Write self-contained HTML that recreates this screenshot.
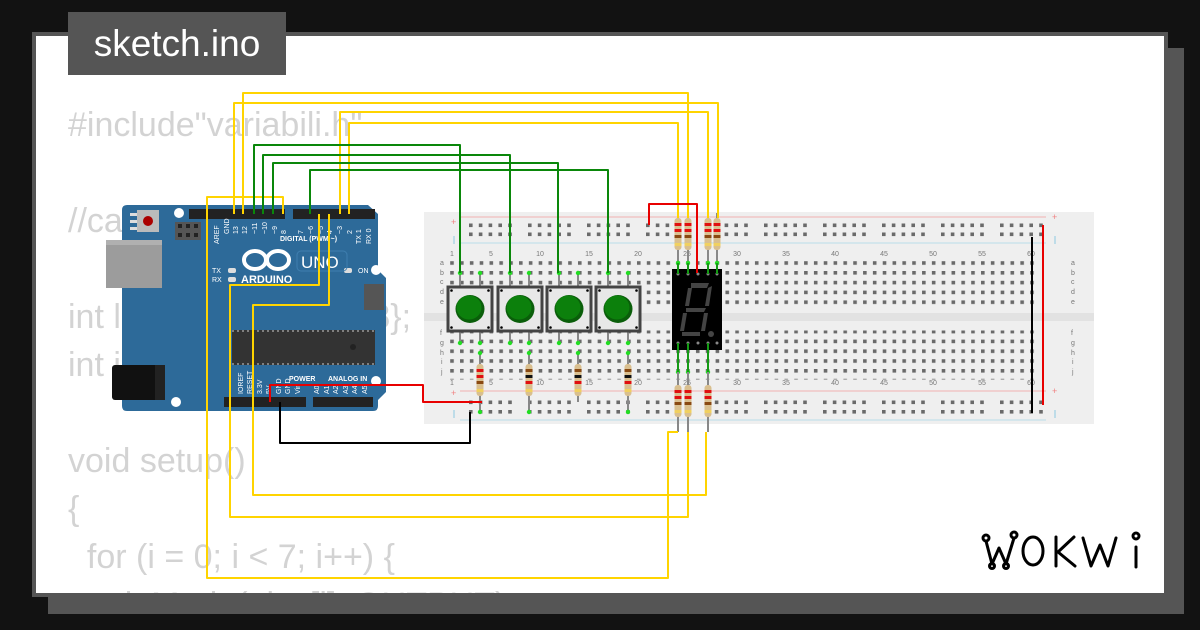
<!DOCTYPE html>
<html><head><meta charset="utf-8"><style>
html,body{margin:0;padding:0;background:#121212;}
body{width:1200px;height:630px;position:relative;overflow:hidden;font-family:"Liberation Sans",sans-serif;}
.shadow{position:absolute;left:48px;top:48px;width:1136px;height:566px;background:#555;}
.panel{position:absolute;left:32px;top:32px;width:1128px;height:557px;background:#fff;border:4px solid #555;}
.tab{position:absolute;left:68px;top:12px;width:218px;height:63px;background:#555;color:#fff;font-size:37px;line-height:63px;text-align:center;}
.code{position:absolute;left:68px;top:101px;font-size:34px;line-height:48px;color:#d3d3d3;white-space:pre;}
.clip{position:absolute;left:36px;top:36px;width:1128px;height:557px;overflow:hidden;}
svg{position:absolute;left:0;top:0;}
</style></head><body>
<div class="shadow"></div>
<div class="panel"></div>
<div class="clip"><div class="code" style="left:32px;top:65px">#include"variabili.h"

//carattere

int lettere[] = {10, 9, 8};
int i;

void setup()
{
  for (i = 0; i &lt; 7; i++) {
    pinMode(pins[i], OUTPUT);</div></div>
<div class="tab">sketch.ino</div>
<svg width="1200" height="630" viewBox="0 0 1200 630">
<defs>
<pattern id="h" x="450.2" y="261.2" width="9.83" height="9.8" patternUnits="userSpaceOnUse"><rect width="3.6" height="3.6" fill="#6a6a6a"/></pattern>
<pattern id="r" x="469" y="0" width="59" height="10" patternUnits="userSpaceOnUse">
<rect x="0" width="3.6" height="3.6" fill="#6a6a6a"/><rect x="9.8" width="3.6" height="3.6" fill="#6a6a6a"/><rect x="19.6" width="3.6" height="3.6" fill="#6a6a6a"/><rect x="29.4" width="3.6" height="3.6" fill="#6a6a6a"/><rect x="39.2" width="3.6" height="3.6" fill="#6a6a6a"/></pattern>
<g id="btn"><rect x="0" y="0" width="44" height="44" fill="#e8e8e8" stroke="#444" stroke-width="3"/>
<circle cx="3.5" cy="3.5" r="1.3" fill="#000"/><circle cx="40.5" cy="3.5" r="1.3" fill="#000"/><circle cx="3.5" cy="40.5" r="1.3" fill="#000"/><circle cx="40.5" cy="40.5" r="1.3" fill="#000"/>
<ellipse cx="22" cy="22" rx="14.5" ry="14" fill="#0a5e0a"/><ellipse cx="21" cy="20.5" rx="12.5" ry="12" fill="#0c800c"/></g>
<g id="resA"><rect x="-3.5" y="0" width="7" height="32" rx="3" fill="#d9bf8f"/><rect x="-3.5" y="5" width="7" height="3" fill="#e01010"/><rect x="-3.5" y="11" width="7" height="3" fill="#e01010"/><rect x="-3.5" y="17" width="7" height="3" fill="#8a4a12"/><rect x="-3.5" y="25" width="7" height="3" fill="#f0d060"/></g>
<g id="resB"><rect x="-3.5" y="0" width="7" height="32" rx="3" fill="#d9bf8f"/><rect x="-3.5" y="5" width="7" height="3" fill="#8a4a12"/><rect x="-3.5" y="11" width="7" height="3" fill="#111"/><rect x="-3.5" y="17" width="7" height="3" fill="#e01010"/><rect x="-3.5" y="25" width="7" height="3" fill="#f0d060"/></g>
</defs>

<!-- breadboard -->
<rect x="424" y="212" width="670" height="212" fill="#efefef"/>
<rect x="424" y="313" width="670" height="8" fill="#e2e2e2"/>
<line x1="460" y1="217" x2="1046" y2="217" stroke="#f2b0b0" stroke-width="1"/>
<line x1="460" y1="243" x2="1046" y2="243" stroke="#b8dcea" stroke-width="1"/>
<line x1="460" y1="391" x2="1046" y2="391" stroke="#f2b0b0" stroke-width="1"/>
<line x1="460" y1="420" x2="1046" y2="420" stroke="#b8dcea" stroke-width="1"/>
<g fill="#f08080" font-size="9"><text x="451" y="225">+</text><text x="1052" y="220">+</text><text x="451" y="396">+</text><text x="1052" y="394">+</text></g>
<g stroke="#8cc8e0"><line x1="454" y1="236" x2="454" y2="244"/><line x1="1055" y1="236" x2="1055" y2="244"/><line x1="454" y1="410" x2="454" y2="418"/><line x1="1055" y1="410" x2="1055" y2="418"/></g>
<g transform="translate(0,223.5)"><rect x="469" y="0" width="576" height="4" fill="url(#r)"/></g>
<g transform="translate(0,232.5)"><rect x="469" y="0" width="576" height="4" fill="url(#r)"/></g>
<g transform="translate(0,400.5)"><rect x="469" y="0" width="576" height="4" fill="url(#r)"/></g>
<g transform="translate(0,410)"><rect x="469" y="0" width="576" height="4" fill="url(#r)"/></g>
<rect x="450" y="261" width="590" height="49" fill="url(#h)"/>
<rect x="450" y="330.5" width="590" height="49" fill="url(#h)"/>
<g font-size="7" fill="#777">
<text x="440" y="265">a</text><text x="440" y="275">b</text><text x="440" y="284">c</text><text x="440" y="294">d</text><text x="440" y="304">e</text>
<text x="440" y="335">f</text><text x="440" y="345">g</text><text x="440" y="355">h</text><text x="441" y="364">i</text><text x="441" y="374">j</text>
<text x="1071" y="265">a</text><text x="1071" y="275">b</text><text x="1071" y="284">c</text><text x="1071" y="294">d</text><text x="1071" y="304">e</text>
<text x="1071" y="335">f</text><text x="1071" y="345">g</text><text x="1071" y="355">h</text><text x="1072" y="364">i</text><text x="1072" y="374">j</text>
</g>
<g font-size="7" fill="#777" text-anchor="middle">
<text x="452" y="256">1</text><text x="491" y="256">5</text><text x="540" y="256">10</text><text x="589" y="256">15</text><text x="638" y="256">20</text><text x="687" y="256">25</text><text x="737" y="256">30</text><text x="786" y="256">35</text><text x="835" y="256">40</text><text x="884" y="256">45</text><text x="933" y="256">50</text><text x="982" y="256">55</text><text x="1031" y="256">60</text>
<text x="452" y="385">1</text><text x="491" y="385">5</text><text x="540" y="385">10</text><text x="589" y="385">15</text><text x="638" y="385">20</text><text x="687" y="385">25</text><text x="737" y="385">30</text><text x="786" y="385">35</text><text x="835" y="385">40</text><text x="884" y="385">45</text><text x="933" y="385">50</text><text x="982" y="385">55</text><text x="1031" y="385">60</text>
</g>

<!-- arduino -->
<path d="M122 210 Q122 205 127 205 L368 205 L378 214 L378 270 L386 278 L386 392 L378 400 L378 406 Q378 411 373 411 L127 411 Q122 411 122 406 Z" fill="#2d6a99"/>
<rect x="106" y="240" width="56" height="48" fill="#9c9c9c"/><rect x="106" y="240" width="56" height="5" fill="#b0b0b0"/>
<rect x="112" y="365" width="53" height="35" rx="3" fill="#111"/><rect x="155" y="365" width="10" height="35" fill="#222"/>
<rect x="137" y="210" width="22" height="22" fill="#bbb"/><circle cx="148" cy="221" r="5" fill="#a00"/>
<rect x="130" y="213" width="7" height="3" fill="#ddd"/><rect x="130" y="220" width="7" height="3" fill="#ddd"/><rect x="130" y="227" width="7" height="3" fill="#ddd"/>
<rect x="175" y="222" width="26" height="18" fill="#555"/>
<g fill="#222"><rect x="178" y="224" width="4" height="4"/><rect x="186" y="224" width="4" height="4"/><rect x="194" y="224" width="4" height="4"/><rect x="178" y="233" width="4" height="4"/><rect x="186" y="233" width="4" height="4"/><rect x="194" y="233" width="4" height="4"/></g>
<rect x="364" y="284" width="20" height="26" fill="#555"/>
<circle cx="179" cy="213" r="5" fill="#fff"/><circle cx="376" cy="270" r="5" fill="#fff"/><circle cx="376" cy="381" r="5" fill="#fff"/><circle cx="176" cy="402" r="5" fill="#fff"/>
<rect x="189" y="209" width="96" height="10" fill="#222"/><rect x="293" y="209" width="82" height="10" fill="#222"/>
<rect x="224" y="397" width="82" height="10" fill="#222"/><rect x="313" y="397" width="60" height="10" fill="#222"/>
<rect x="232" y="330" width="143" height="35" fill="#333"/><line x1="232" y1="331" x2="375" y2="331" stroke="#ccc" stroke-dasharray="2 3"/><line x1="232" y1="364" x2="375" y2="364" stroke="#ccc" stroke-dasharray="2 3"/>
<circle cx="353" cy="347" r="3" fill="#222"/>
<g fill="#fff" font-size="7" font-weight="bold">
<text x="280" y="241">DIGITAL (PWM ~)</text>
<text x="289" y="381">POWER</text><text x="328" y="381">ANALOG IN</text>
</g>
<g fill="#fff" font-size="7"><text x="212" y="273">TX</text><text x="212" y="282">RX</text><text x="358" y="273">ON</text></g>
<rect x="228" y="268" width="8" height="5" rx="2" fill="#ddd"/><rect x="228" y="277" width="8" height="5" rx="2" fill="#ddd"/><rect x="344" y="268" width="8" height="5" rx="2" fill="#ddd"/>
<g fill="none" stroke="#fff" stroke-width="4"><ellipse cx="255" cy="260" rx="11" ry="9"/><ellipse cx="278" cy="260" rx="11" ry="9"/></g>
<text x="241" y="283" fill="#fff" font-size="11" font-weight="bold">ARDUINO</text>
<rect x="297" y="251" width="50" height="20" rx="4" fill="none" stroke="#3f7fb0"/>
<text x="301" y="268" fill="#fff" font-size="17">UNO</text>
<g fill="#fff" font-size="7" transform="rotate(-90)">
<text x="-244" y="219">AREF</text><text x="-234" y="229">GND</text><text x="-234" y="238">13</text><text x="-234" y="247">12</text><text x="-234" y="257">~11</text><text x="-234" y="267">~10</text><text x="-234" y="277">~9</text><text x="-234" y="286">8</text>
<text x="-234" y="303">7</text><text x="-234" y="313">~6</text><text x="-234" y="323">~5</text><text x="-234" y="332">4</text><text x="-234" y="342">~3</text><text x="-234" y="352">2</text><text x="-244" y="361">TX 1</text><text x="-244" y="371">RX 0</text>
<text x="-394" y="243">IOREF</text><text x="-394" y="252">RESET</text><text x="-394" y="262">3.3V</text><text x="-394" y="271">5V</text><text x="-394" y="281">GND</text><text x="-394" y="290">GND</text><text x="-394" y="300">Vin</text>
<text x="-394" y="319">A0</text><text x="-394" y="329">A1</text><text x="-394" y="338">A2</text><text x="-394" y="348">A3</text><text x="-394" y="357">A4</text><text x="-394" y="367">A5</text>
</g>

<!-- components on breadboard -->
<g stroke="#888" stroke-width="2">
<line x1="460" y1="273" x2="460" y2="343"/><line x1="480" y1="273" x2="480" y2="343"/>
<line x1="510" y1="273" x2="510" y2="343"/><line x1="529" y1="273" x2="529" y2="343"/>
<line x1="559" y1="273" x2="559" y2="343"/><line x1="578" y1="273" x2="578" y2="343"/>
<line x1="608" y1="273" x2="608" y2="343"/><line x1="628" y1="273" x2="628" y2="343"/>
<line x1="480" y1="353" x2="480" y2="412"/><line x1="529" y1="353" x2="529" y2="412"/><line x1="578" y1="353" x2="578" y2="402"/><line x1="628" y1="353" x2="628" y2="412"/>
<line x1="678" y1="213" x2="678" y2="265"/><line x1="688" y1="213" x2="688" y2="265"/><line x1="708" y1="213" x2="708" y2="265"/><line x1="717" y1="213" x2="717" y2="265"/>
</g>
<use href="#btn" x="448" y="287"/><use href="#btn" x="498" y="287"/><use href="#btn" x="547" y="287"/><use href="#btn" x="596" y="287"/>
<use href="#resA" x="480" y="364"/><use href="#resB" x="529" y="364"/><use href="#resB" x="578" y="364"/><use href="#resB" x="628" y="364"/>
<use href="#resA" x="678" y="218"/><use href="#resA" x="688" y="218"/><use href="#resA" x="708" y="218"/><use href="#resA" x="717" y="218"/>
<g fill="#22dd22">
<circle cx="460" cy="273" r="2.2"/><circle cx="480" cy="273" r="2.2"/><circle cx="510" cy="273" r="2.2"/><circle cx="529" cy="273" r="2.2"/><circle cx="559" cy="273" r="2.2"/><circle cx="578" cy="273" r="2.2"/><circle cx="608" cy="273" r="2.2"/><circle cx="628" cy="273" r="2.2"/>
<circle cx="460" cy="343" r="2.2"/><circle cx="480" cy="343" r="2.2"/><circle cx="510" cy="343" r="2.2"/><circle cx="529" cy="343" r="2.2"/><circle cx="559" cy="343" r="2.2"/><circle cx="578" cy="343" r="2.2"/><circle cx="608" cy="343" r="2.2"/><circle cx="628" cy="343" r="2.2"/>
<circle cx="480" cy="353" r="2.2"/><circle cx="529" cy="353" r="2.2"/><circle cx="578" cy="353" r="2.2"/><circle cx="628" cy="353" r="2.2"/>
<circle cx="480" cy="412" r="2.2"/><circle cx="529" cy="412" r="2.2"/><circle cx="628" cy="412" r="2.2"/>
<circle cx="678" cy="263" r="2.2"/><circle cx="688" cy="263" r="2.2"/><circle cx="708" cy="263" r="2.2"/><circle cx="717" cy="263" r="2.2"/>
<circle cx="678" cy="372" r="2.2"/><circle cx="688" cy="372" r="2.2"/><circle cx="708" cy="372" r="2.2"/>
</g>
<!-- 7 seg -->
<rect x="672" y="269" width="50" height="81" fill="#000"/>
<g fill="#444">
<polygon points="691,283 709,283 707,288 691,288"/>
<polygon points="688,288 692,288 689,306 685,306"/>
<polygon points="708,288 712,286 709,306 705,306"/>
<polygon points="686,308 706,308 704,312 686,312"/>
<polygon points="683,313 687,313 684,331 680,331"/>
<polygon points="704,313 708,313 705,331 701,331"/>
<polygon points="682,332 700,332 700,336 682,336"/>
<circle cx="711" cy="334" r="3"/>
</g>
<g fill="#888"><circle cx="678" cy="274" r="1.5"/><circle cx="688" cy="274" r="1.5"/><circle cx="698" cy="274" r="1.5"/><circle cx="708" cy="274" r="1.5"/><circle cx="717" cy="274" r="1.5"/><circle cx="678" cy="343" r="1.5"/><circle cx="688" cy="343" r="1.5"/><circle cx="698" cy="343" r="1.5"/><circle cx="708" cy="343" r="1.5"/><circle cx="717" cy="343" r="1.5"/></g>
<g stroke="#159a15" stroke-width="2"><line x1="678" y1="263" x2="678" y2="274"/><line x1="688" y1="263" x2="688" y2="274"/><line x1="708" y1="263" x2="708" y2="274"/><line x1="717" y1="263" x2="717" y2="274"/>
<line x1="678" y1="343" x2="678" y2="372"/><line x1="688" y1="343" x2="688" y2="372"/><line x1="708" y1="343" x2="708" y2="372"/></g>
<g stroke="#888" stroke-width="2"><line x1="678" y1="372" x2="678" y2="432"/><line x1="688" y1="372" x2="688" y2="432"/><line x1="708" y1="372" x2="708" y2="432"/></g>
<use href="#resA" x="678" y="385"/><use href="#resA" x="688" y="385"/><use href="#resA" x="708" y="385"/>

<!-- wires -->
<g fill="none" stroke-width="2" stroke-linejoin="round">
<g stroke="#ffd400">
<polyline points="243,214 243,93 688,93 688,218"/>
<polyline points="234,214 234,103 718,103 718,218"/>
<polyline points="340,214 340,112 708,112 708,218"/>
<polyline points="349,214 349,123 678,123 678,218"/>
<polyline points="283,214 283,197 207,197 207,578 668,578 668,432 678,432"/>
<polyline points="319,214 319,285 230,285 230,517 688,517 688,432"/>
<polyline points="329,214 329,305 253,305 253,495 706,495 706,432"/>
</g>
<g stroke="#0a870a">
<polyline points="254,214 254,145 460,145 460,273"/>
<polyline points="263,214 263,155 510,155 510,273"/>
<polyline points="273,214 273,163 558,163 558,273"/>
<polyline points="310,214 310,170 608,170 608,273"/>
</g>
<g stroke="#e80000">
<polyline points="270,402 270,385 423,385 423,402 482,402"/>
<polyline points="649,225 649,204 697,204 697,273"/>
<line x1="1043" y1="225" x2="1043" y2="405"/>
</g>
<g stroke="#000">
<polyline points="280,402 280,443 470,443 470,412"/>
<line x1="1032" y1="237" x2="1032" y2="413"/>
</g>
</g>
<!-- wokwi logo -->
<g fill="none" stroke="#000" stroke-width="3" stroke-linecap="round" stroke-linejoin="round">
<path d="M986 541 L992 564 L999 548 L1006 564 L1014 538"/>
<circle cx="986" cy="538" r="3"/><circle cx="992" cy="566" r="2.5"/><circle cx="1006" cy="566" r="2.5"/><circle cx="1014" cy="535" r="3"/>
<ellipse cx="1033" cy="551" rx="10" ry="14"/>
<path d="M1056 537 L1056 566 M1074 537 L1058 552 L1075 566"/>
<path d="M1083 538 L1091 566 L1100 545 L1108 566 L1116 538"/>
<path d="M1136 547 L1136 567"/><circle cx="1136" cy="536" r="3"/>
</g>
</svg>
</body></html>
